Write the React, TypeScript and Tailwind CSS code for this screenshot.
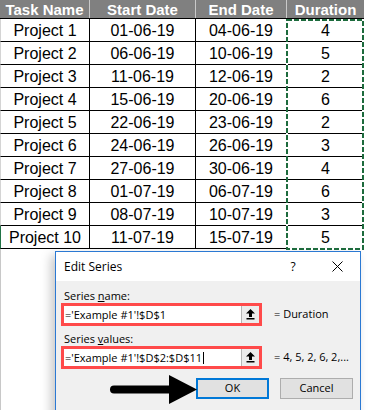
import React from "react";

const rows: [string, string, string, string][] = [
  ["Project 1", "01-06-19", "04-06-19", "4"],
  ["Project 2", "06-06-19", "10-06-19", "5"],
  ["Project 3", "11-06-19", "12-06-19", "2"],
  ["Project 4", "15-06-19", "20-06-19", "6"],
  ["Project 5", "22-06-19", "23-06-19", "2"],
  ["Project 6", "24-06-19", "26-06-19", "3"],
  ["Project 7", "27-06-19", "30-06-19", "4"],
  ["Project 8", "01-07-19", "06-07-19", "6"],
  ["Project 9", "08-07-19", "10-07-19", "3"],
  ["Project 10", "11-07-19", "15-07-19", "5"],
];

function UploadBtn() {
  return (
    <div className="ml-auto flex h-full w-[18px] items-center justify-center border-l border-[#b5b5b5] bg-[#ececec]">
      <svg width="9" height="11" viewBox="0 0 9 11">
        <polygon points="4.5,0 9,4.5 6,4.5 6,8 3,8 3,4.5 0,4.5" fill="#000" />
        <rect x="0.5" y="9" width="8" height="1.5" fill="#000" />
      </svg>
    </div>
  );
}

export default function App() {
  return (
    <div
      className="relative h-[410px] w-[371px] overflow-hidden bg-white"
      style={{ fontFamily: '"Liberation Sans", Arial, sans-serif' }}
    >
      {/* Table */}
      <div className="w-[364px]">
        <div className="flex h-[19px] bg-[#808080] border-b border-black text-[15px] font-bold text-white leading-none">
          <div className="flex w-[90px] items-center justify-center border-r border-[#c9c9c9]">Task Name</div>
          <div className="flex w-[106px] items-center justify-center border-r border-[#c9c9c9]">Start Date</div>
          <div className="flex w-[91px] items-center justify-center border-r border-[#c9c9c9]">End Date</div>
          <div className="flex w-[77px] items-center justify-center">Duration</div>
        </div>
        {rows.map((r, i) => (
          <div
            key={i}
            className={`flex h-[23px] border-b border-black text-[16px] leading-none text-black ${i === 9 ? "border-l border-l-[#217346]" : "border-l border-l-[#d4d4d4]"}`}
          >
            <div className="flex w-[89px] items-center justify-center border-r border-black pt-[1px]">{r[0]}</div>
            <div className="flex w-[106px] items-center justify-center border-r border-black pt-[1px]">{r[1]}</div>
            <div className="flex w-[91px] items-center justify-center border-r border-black pt-[1px]">{r[2]}</div>
            <div className="flex w-[77px] items-center justify-center pt-[1px]">{r[3]}</div>
          </div>
        ))}
      </div>

      {/* Marching ants around Duration */}
      <svg className="absolute left-[286px] top-[19px]" width="79" height="232" viewBox="0 0 79 232">
        <rect x="1" y="1" width="76" height="229" fill="none" stroke="#ffffff" strokeWidth="2" />
        <rect x="1" y="1" width="76" height="229" fill="none" stroke="#1d6b3d" strokeWidth="2" strokeDasharray="5 2" />
      </svg>

      {/* Sheet area below with dialog */}
      <div className="h-[200px] border-l border-[#c8c8c8] pl-[54px] pt-[2px]">
        <div
          className="w-[306px] border border-[#2b79d3] bg-[#f0f0f0] shadow-[-4px_4px_10px_rgba(0,0,0,0.22)] text-[11px] text-black"
          style={{ fontFamily: '"Open Sans", "Noto Sans", sans-serif' }}
        >
          <div className="flex h-[29px] items-center bg-white pl-[8px]">
            <span className="text-[12px]">Edit Series</span>
            <span className="ml-auto flex w-[20px] justify-center text-[12px]">?</span>
            <span className="ml-[19px] mr-[8px] flex w-[30px] justify-center">
              <svg width="11" height="11" viewBox="0 0 11 11">
                <path d="M0.5 0.5 L10.5 10.5 M10.5 0.5 L0.5 10.5" stroke="#000" strokeWidth="1" />
              </svg>
            </span>
          </div>
          <div className="px-[5px] pt-[7px] pb-[20px]">
            <div className="ml-[3px] h-[15px] leading-[15px]">
              Series <span className="underline">n</span>ame:
            </div>
            <div className="flex items-center">
              <div className="flex h-[23px] w-[201px] items-center border-[3px] border-[#ff4a4a] bg-white">
                <span className="pl-[1px] leading-none whitespace-nowrap">='Example #1'!$D$1</span>
                <UploadBtn />
              </div>
              <span className="ml-[12px]">= Duration</span>
            </div>
            <div className="ml-[3px] mt-[5px] h-[15px] leading-[15px]">
              Series <span className="underline">v</span>alues:
            </div>
            <div className="flex items-center">
              <div className="flex h-[23px] w-[201px] items-center border-[3px] border-[#ff4a4a] bg-white">
                <span className="pl-[1px] leading-none whitespace-nowrap">='Example #1'!$D$2:$D$11</span>
                <span className="ml-[1px] h-[12px] w-px bg-black" />
                <UploadBtn />
              </div>
              <span className="ml-[12px] whitespace-nowrap">= 4, 5, 2, 6, 2,...</span>
            </div>
            <div className="mt-[9px] flex justify-end gap-[11px] pr-[2px]">
              <div className="flex h-[21px] w-[73px] items-center justify-center border-2 border-[#0078d7] bg-[#e1e1e1]">OK</div>
              <div className="flex h-[21px] w-[73px] items-center justify-center border border-[#adadad] bg-[#e1e1e1]">Cancel</div>
            </div>
          </div>
        </div>
      </div>

      {/* Black arrow pointing to OK */}
      <svg className="absolute left-[108px] top-[374px]" width="92" height="32" viewBox="0 0 92 32">
        <line x1="6" y1="15.5" x2="66" y2="15.5" stroke="#000" strokeWidth="8" strokeLinecap="round" />
        <polygon points="61,1 89,15.5 61,30" fill="#000" />
      </svg>
    </div>
  );
}
